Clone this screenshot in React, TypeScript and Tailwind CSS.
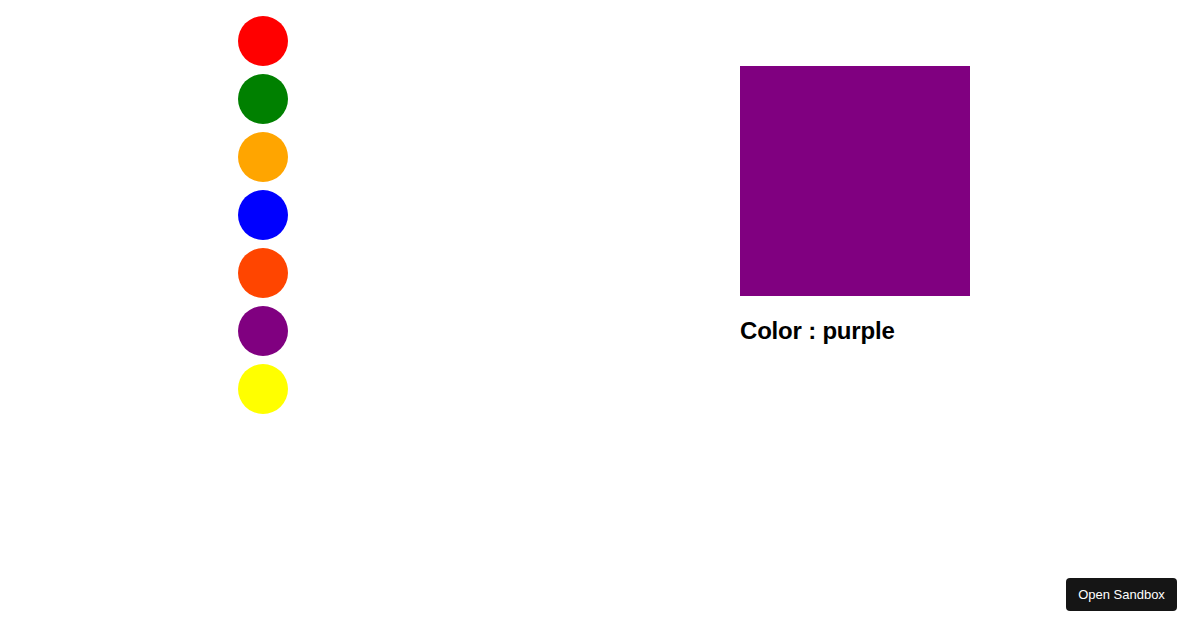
const COLORS = ["red", "green", "orange", "blue", "orangered", "purple", "yellow"];

export default function App() {
  const selected = "purple";

  return (
    <main className="relative h-[630px] w-[1200px] bg-white font-['Liberation_Sans',Arial,sans-serif]">
      <div className="flex">
        <div className="ml-[238px] flex flex-col gap-2 pt-4">
          {COLORS.map((color) => (
            <button
              key={color}
              type="button"
              aria-label={color}
              className="h-[50px] w-[50px] rounded-full"
              style={{ backgroundColor: color }}
            />
          ))}
        </div>
        <div className="ml-[452px] pt-[66px]">
          <div className="h-[230px] w-[230px]" style={{ backgroundColor: selected }} />
          <h2 className="mt-[20px] text-[24px] font-bold leading-[30px] tracking-[-0.2px] text-black">
            Color : {selected}
          </h2>
        </div>
      </div>

      <button
        type="button"
        className="fixed bottom-[19px] right-[23px] h-[33px] w-[111px] rounded-[4px] bg-[#151515] text-[13px] text-white"
      >
        Open Sandbox
      </button>
    </main>
  );
}
